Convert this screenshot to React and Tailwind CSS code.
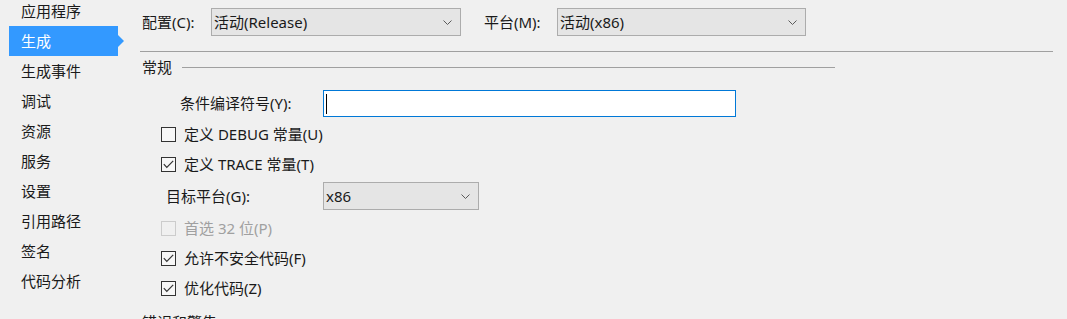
import React from 'react';

const navItems = ['应用程序', '生成', '生成事件', '调试', '资源', '服务', '设置', '引用路径', '签名', '代码分析'];

function Chevron() {
  return (
    <svg width="9" height="5" viewBox="0 0 9 5" className="shrink-0">
      <polyline points="0.5,0.5 4.5,4.5 8.5,0.5" fill="none" stroke="#5a5a5a" strokeWidth="1" />
    </svg>
  );
}

function Select({ value, className }) {
  return (
    <div className={`h-[28px] flex items-center justify-between pl-[2px] pr-[8px] bg-[#e5e5e5] border border-[#acacac] ${className}`}>
      <span>{value}</span>
      <Chevron />
    </div>
  );
}

function Check({ checked, disabled, label }) {
  return (
    <div className="h-[30px] flex items-center pl-[21px]">
      <div className={`w-[15px] h-[15px] border flex items-center justify-center ${disabled ? 'border-[#cccccc] bg-[#f0f0f0]' : 'border-[#333333] bg-[#f7f7f7]'}`}>
        {checked && (
          <svg width="11" height="9" viewBox="0 0 11 9">
            <polyline points="0.8,4.2 3.8,7.4 10.2,0.8" fill="none" stroke="#333333" strokeWidth="1.2" />
          </svg>
        )}
      </div>
      <span className={`ml-[8px] ${disabled ? 'text-[#a0a0a0]' : ''}`}>{label}</span>
    </div>
  );
}

export default function App() {
  return (
    <div
      className="w-[1067px] h-[319px] overflow-hidden bg-[#f0f0f0] flex text-[15px] text-[#1a1a1a] leading-none"
      style={{ fontFamily: '"Noto Sans", "Noto Sans CJK SC", sans-serif' }}
    >
      {/* left nav */}
      <div className="w-[140px] shrink-0 mt-[-4px] pl-[9px]">
        {navItems.map((item) => (
          item === '生成' ? (
            <div key={item} className="h-[30px] flex items-center">
              <div className="w-[109px] h-[30px] bg-[#3399ff] text-white flex items-center pl-[12px]">{item}</div>
              <div className="w-0 h-0 border-y-[6px] border-l-[6px] border-y-transparent border-l-[#3399ff]"></div>
            </div>
          ) : (
            <div key={item} className="h-[30px] flex items-center pl-[12px]">{item}</div>
          )
        ))}
      </div>

      {/* main */}
      <div className="flex-1 pt-[8px]">
        <div className="h-[28px] flex items-center">
          <span className="w-[71px] pl-[2px]">配置(C):</span>
          <Select value="活动(Release)" className="w-[250px]" />
          <span className="w-[96px] pl-[23px]">平台(M):</span>
          <Select value="活动(x86)" className="w-[249px]" />
        </div>

        <div className="mt-[15px] w-[913px] border-t border-[#a0a0a0]"></div>

        <div className="mt-[5px] h-[20px] flex items-center pl-[2px]">
          <span>常规</span>
          <div className="ml-[10px] w-[653px] border-t border-[#a0a0a0]"></div>
        </div>

        <div className="mt-[13px] h-[27px] flex items-center">
          <span className="w-[183px] pl-[40px]">条件编译符号(Y):</span>
          <div className="w-[413px] h-[27px] bg-white border border-[#0078d7] flex items-center pl-[2px]">
            <div className="w-[1px] h-[20px] bg-black"></div>
          </div>
        </div>

        <div className="mt-[2px]">
          <Check label="定义 DEBUG 常量(U)" />
          <Check checked label="定义 TRACE 常量(T)" />
        </div>

        <div className="h-[34px] flex items-center">
          <span className="w-[183px] pl-[26px]">目标平台(G):</span>
          <Select value="x86" className="w-[156px]" />
        </div>

        <Check disabled label="首选 32 位(P)" />
        <Check checked label="允许不安全代码(F)" />
        <Check checked label="优化代码(Z)" />

        <div className="h-[30px] flex items-center pl-[2px] mt-[4px]">错误和警告</div>
      </div>
    </div>
  );
}
